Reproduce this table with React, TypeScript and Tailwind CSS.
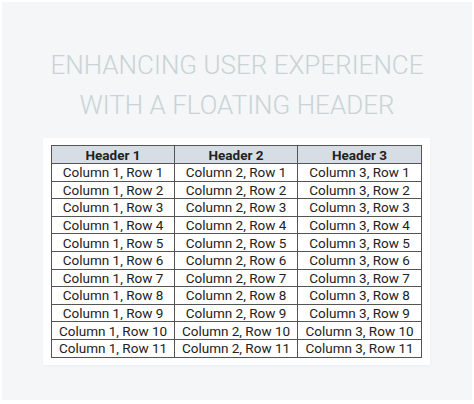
const rows = Array.from({ length: 11 }, (_, i) => i + 1);

export default function App() {
  return (
    <div className="w-[474px] h-[404px] bg-white pt-[2px] pl-[2px] pr-[2px] pb-[4px]">
      <div className="h-full bg-[#f4f6f7] flex flex-col items-center">
        <h1
          className="mt-[43px] text-center text-[26px] leading-[40px] font-light text-[#c9d3d5]"
          style={{ fontFamily: "Roboto, sans-serif" }}
        >
          ENHANCING USER EXPERIENCE
          <br />
          WITH A FLOATING HEADER
        </h1>
        <div className="mt-[13px] ml-[-1px] w-[387px] bg-white px-[8px] pt-[7px] pb-[7px] shadow-[0_1px_3px_rgba(0,0,0,0.04)]">
          <table
            className="w-[371px] border-collapse text-[13.5px] text-[#222]"
            style={{ fontFamily: "Roboto, sans-serif" }}
          >
            <thead>
              <tr className="h-[18px] bg-[#d6dde5]">
                <th className="w-[123px] border border-[#555] p-0 font-bold leading-[16px]">Header 1</th>
                <th className="w-[123px] border border-[#555] p-0 font-bold leading-[16px]">Header 2</th>
                <th className="border border-[#555] p-0 font-bold leading-[16px]">Header 3</th>
              </tr>
            </thead>
            <tbody>
              {rows.map((r) => (
                <tr key={r} className="h-[17.6px]">
                  <td className="border border-[#555] p-0 text-center leading-[16px]">Column 1, Row {r}</td>
                  <td className="border border-[#555] p-0 text-center leading-[16px]">Column 2, Row {r}</td>
                  <td className="border border-[#555] p-0 text-center leading-[16px]">Column 3, Row {r}</td>
                </tr>
              ))}
            </tbody>
          </table>
        </div>
      </div>
    </div>
  );
}
